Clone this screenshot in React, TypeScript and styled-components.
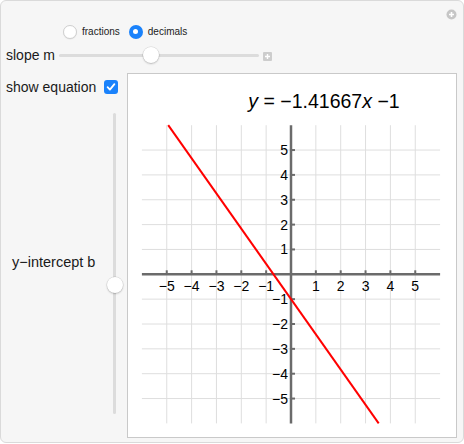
import React from 'react'
import styled, { createGlobalStyle } from 'styled-components'

const GlobalStyle = createGlobalStyle`
    html, body {
        margin: 0;
        padding: 0;
        background: #ffffff;
    }
    body {
        font-family: "Liberation Sans", Arial, sans-serif;
        color: #1a1a1a;
    }
`

const slope = -1.41667
const intercept = -1

// plot geometry, in svg coordinates
const CX = 163
const CY = 200.3
const U = 24.85
const px = (v: number) => CX + v * U
const py = (v: number) => CY - v * U
const ticks = [-5, -4, -3, -2, -1, 1, 2, 3, 4, 5]
const minus = (n: number) => (n < 0 ? '\u2212' + Math.abs(n) : String(n))

const Plot = () => {
    const yTop = 6
    const yBottom = -6
    const x1 = (yTop - intercept) / slope
    const x2 = (yBottom - intercept) / slope
    return (
        <svg width="328" height="363" viewBox="0 0 328 363">
            <text x="196" y="34" fontSize="19.5" textAnchor="middle" fill="#000" fontFamily='"Liberation Sans", Arial, sans-serif'>
                <tspan fontStyle="italic">y</tspan> = {'\u2212'}1.41667<tspan fontStyle="italic">x</tspan> {'\u2212'}1
            </text>
            {ticks.map(t => (
                <line key={'v' + t} x1={px(t)} y1={py(6)} x2={px(t)} y2={py(-6)} stroke="#dedede" strokeWidth="1" />
            ))}
            {ticks.map(t => (
                <line key={'h' + t} x1={px(-6)} y1={py(t)} x2={px(6)} y2={py(t)} stroke="#dedede" strokeWidth="1" />
            ))}
            <line x1={px(-6)} y1={CY} x2={px(6)} y2={CY} stroke="#6b6b6b" strokeWidth="2.5" />
            <line x1={CX} y1={py(6)} x2={CX} y2={py(-6)} stroke="#6b6b6b" strokeWidth="2.5" />
            {ticks.map(t => (
                <line key={'tx' + t} x1={px(t)} y1={CY} x2={px(t)} y2={CY - 4} stroke="#6b6b6b" strokeWidth="2" />
            ))}
            {ticks.map(t => (
                <line key={'ty' + t} x1={CX} y1={py(t)} x2={CX + 4} y2={py(t)} stroke="#6b6b6b" strokeWidth="2" />
            ))}
            <line x1={px(x1)} y1={py(yTop)} x2={px(x2)} y2={py(yBottom)} stroke="#ff0000" strokeWidth="2" />
            {ticks.map(t => (
                <text key={'lx' + t} x={px(t)} y={CY + 17} fontSize="14" textAnchor="middle" fill="#000" fontFamily='"Liberation Sans", Arial, sans-serif'>
                    {minus(t)}
                </text>
            ))}
            {ticks.map(t => (
                <text key={'ly' + t} x={CX - 3} y={py(t) + 5} fontSize="14" textAnchor="end" fill="#000" fontFamily='"Liberation Sans", Arial, sans-serif'>
                    {minus(t)}
                </text>
            ))}
        </svg>
    )
}

export default function App() {
    const slopeFrac = 0.46
    const interceptFrac = 0.43
    return (
        <>
            <GlobalStyle />
            <Panel>
                <CornerButton>
                    <svg width="11" height="11" viewBox="0 0 11 11">
                        <circle cx="5.5" cy="5.5" r="5" fill="#c6c6c6" />
                        <path d="M5.5 3v5M3 5.5h5" stroke="#fff" strokeWidth="1.6" />
                    </svg>
                </CornerButton>
                <RadioRow>
                    <RadioOption>
                        <Radio />
                        fractions
                    </RadioOption>
                    <RadioOption>
                        <Radio $checked />
                        decimals
                    </RadioOption>
                </RadioRow>
                <SliderRow>
                    <Label>slope m</Label>
                    <HTrack>
                        <Thumb style={{ left: `${slopeFrac * 100}%`, top: '50%' }} />
                    </HTrack>
                    <PlusBox>
                        <svg width="9" height="9" viewBox="0 0 9 9">
                            <rect x="0" y="0" width="9" height="9" rx="1" fill="#cdcdcd" />
                            <path d="M4.5 2v5M2 4.5h5" stroke="#fff" strokeWidth="1.4" />
                        </svg>
                    </PlusBox>
                </SliderRow>
                <Body>
                    <LeftColumn>
                        <CheckRow>
                            <Label>show equation</Label>
                            <CheckBox>
                                <svg width="10" height="10" viewBox="0 0 10 10">
                                    <path d="M1.6 5.2l2.3 2.4 4.5-5.4" fill="none" stroke="#fff" strokeWidth="1.8" strokeLinecap="round" strokeLinejoin="round" />
                                </svg>
                            </CheckBox>
                        </CheckRow>
                        <VerticalArea>
                            <VLabel>y{'\u2212'}intercept b</VLabel>
                            <VTrack>
                                <Thumb style={{ top: `${(1 - interceptFrac) * 100}%`, left: '50%' }} />
                            </VTrack>
                        </VerticalArea>
                    </LeftColumn>
                    <PlotBox>
                        <Plot />
                    </PlotBox>
                </Body>
            </Panel>
        </>
    )
}

const Panel = styled.div`
    position: relative;
    box-sizing: border-box;
    width: 464px;
    height: 443px;
    border: 1px solid #dadada;
    border-radius: 6px;
    background: #f6f6f6;
    padding: 23px 0 0 5px;
    display: flex;
    flex-direction: column;
`
const CornerButton = styled.div`
    position: absolute;
    top: 8px;
    right: 6px;
    width: 11px;
    height: 11px;
    display: flex;
`
const RadioRow = styled.div`
    display: flex;
    align-items: center;
    gap: 9px;
    height: 15px;
    padding-left: 57px;
    font-size: 10px;
    color: #222;
`
const RadioOption = styled.label`
    display: flex;
    align-items: center;
    gap: 5px;
`
const Radio = styled.span<{ $checked?: boolean }>`
    box-sizing: border-box;
    width: 14px;
    height: 14px;
    border-radius: 50%;
    background: ${p => (p.$checked ? '#1a82fb' : '#ffffff')};
    border: ${p => (p.$checked ? 'none' : '1px solid #cfcfcf')};
    box-shadow: ${p => (p.$checked ? 'none' : '0 0.5px 1px rgba(0,0,0,0.08)')};
    position: relative;
    &::after {
        content: '';
        display: ${p => (p.$checked ? 'block' : 'none')};
        position: absolute;
        left: 4.5px;
        top: 4.5px;
        width: 5px;
        height: 5px;
        border-radius: 50%;
        background: #ffffff;
    }
`
const SliderRow = styled.div`
    display: flex;
    align-items: center;
    height: 20px;
    margin-top: 6px;
`
const Label = styled.span`
    font-size: 14px;
    color: #1a1a1a;
    white-space: nowrap;
`
const HTrack = styled.div`
    position: relative;
    width: 200px;
    height: 3px;
    margin-left: 4px;
    border-radius: 2px;
    background: #dcdcdc;
`
const Thumb = styled.div`
    position: absolute;
    width: 16px;
    height: 16px;
    border-radius: 50%;
    background: #ffffff;
    box-shadow: 0 0 0 0.5px rgba(0,0,0,0.12), 0 1px 2px rgba(0,0,0,0.2);
    transform: translate(-50%, -50%);
`
const PlusBox = styled.div`
    display: flex;
    margin-left: 4px;
    margin-top: 2px;
`
const Body = styled.div`
    display: grid;
    grid-template-columns: 121px 330px;
    margin-top: 8px;
    height: 365px;
`
const LeftColumn = styled.div`
    display: flex;
    flex-direction: column;
`
const CheckRow = styled.div`
    display: flex;
    align-items: center;
    gap: 8px;
    height: 28px;
`
const CheckBox = styled.span`
    box-sizing: border-box;
    width: 14px;
    height: 14px;
    border-radius: 3px;
    background: #1a82fb;
    display: flex;
    align-items: center;
    justify-content: center;
`
const VerticalArea = styled.div`
    flex: 1;
    display: flex;
    align-items: center;
    padding: 12px 0 24px 0;
`
const VLabel = styled.span`
    width: 107px;
    padding-left: 6px;
    margin-bottom: 4px;
    box-sizing: border-box;
    font-size: 14.5px;
    color: #1a1a1a;
    white-space: nowrap;
`
const VTrack = styled.div`
    position: relative;
    align-self: stretch;
    width: 3px;
    border-radius: 2px;
    background: #dcdcdc;
`
const PlotBox = styled.div`
    box-sizing: border-box;
    width: 330px;
    height: 365px;
    border: 1px solid #c9c9c9;
    background: #ffffff;
    display: flex;
`
